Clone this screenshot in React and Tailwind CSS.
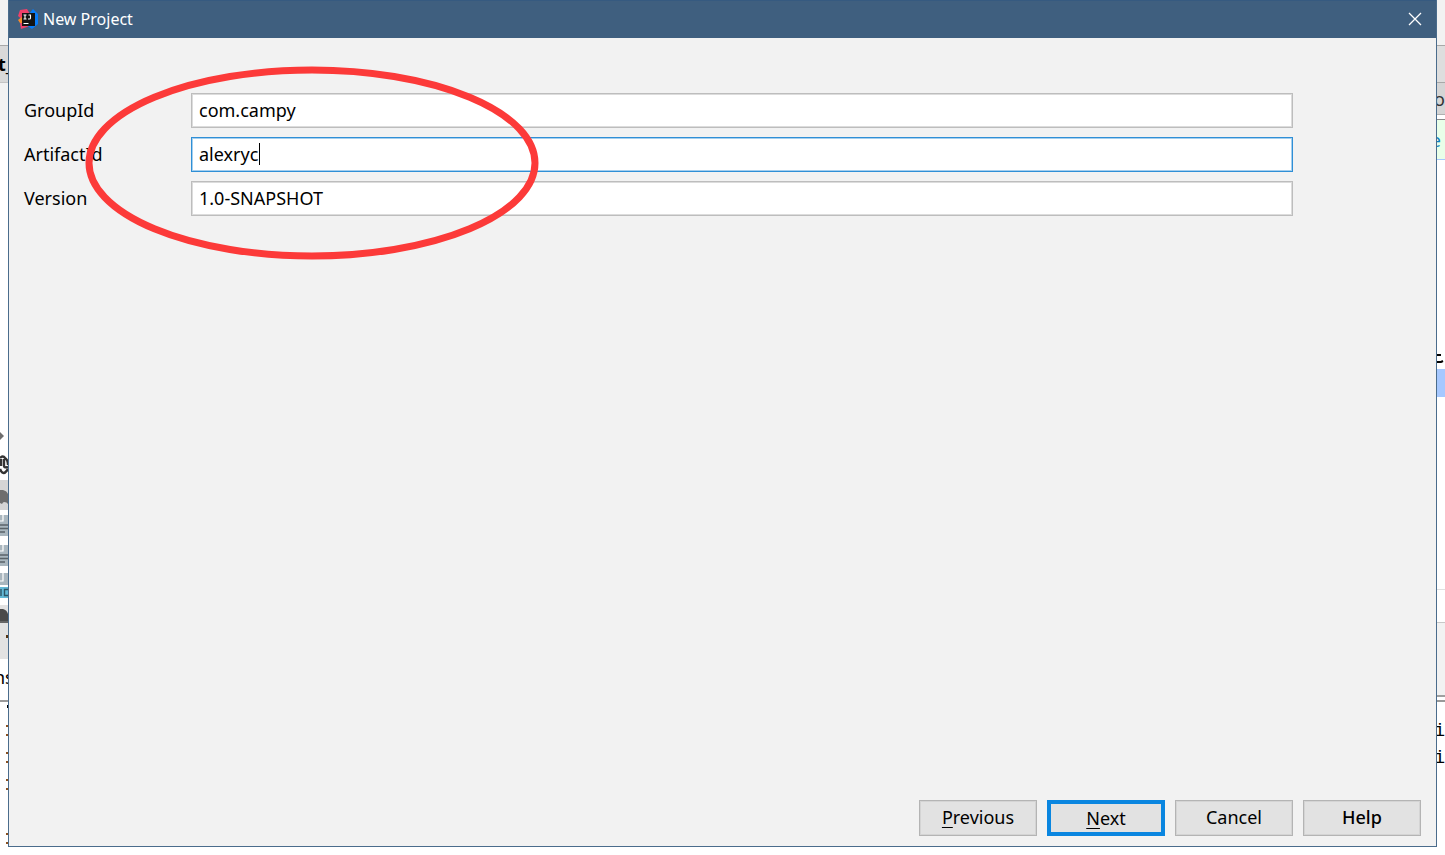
import { useState } from "react";

const fields = [
  { id: "groupId", label: "GroupId" },
  { id: "artifactId", label: "ArtifactId" },
  { id: "version", label: "Version" },
];

function IdeaLogo() {
  return (
    <svg width="20" height="20" viewBox="0 0 20 20" aria-hidden="true">
      <path d="M2 1 L9 0 L12 5 L6 12 L0 7 Z" fill="#f0406a" />
      <path d="M0 11 L5 7 L6 15 L2 14 Z" fill="#f98a2a" />
      <path d="M2 14 L9 15 L12 17 L3 20 Z" fill="#f0406a" />
      <path d="M11 5 L15 0 L20 5 L20 15 L14 20 L8 16 Z" fill="#087cfa" />
      <rect x="4" y="4" width="13" height="13" fill="#141414" />
      <path
        d="M5.5 6h3M7 6v4M5.5 10h3M10.5 6h2.5M12.5 6v3q0 1-1 1h-1.5M5.5 14.5h5"
        stroke="#fff"
        strokeWidth="1.1"
        fill="none"
      />
    </svg>
  );
}

function FileIcon() {
  return (
    <svg width="8" height="21" viewBox="0 0 8 21" className="block" aria-hidden="true">
      <rect width="8" height="21" fill="#a9b6be" />
      <path d="M0 6h3V0" stroke="#fff" strokeWidth="1.2" fill="none" />
      <path d="M0 10h8M0 13.5h8M0 17h5" stroke="#5a6369" strokeWidth="1.6" />
    </svg>
  );
}

// slice of the IDE that shows left of the dialog
function LeftEdge() {
  return (
    <div className="flex w-2 shrink-0 flex-col overflow-hidden bg-white text-lg leading-9 whitespace-nowrap text-black">
      <div className="h-[45px] bg-[#f2f2f2]" />
      <div className="h-[38px] border-y border-[#a8a8a8] border-b-[#c4c4c4] bg-[#d9d9d9] font-bold">
        <span className="-ml-0.5">t_</span>
      </div>
      <div className="h-[37px] bg-[#f2f2f2]" />
      <div className="h-[310px]" />
      <svg width="8" height="12" viewBox="0 0 8 12" aria-hidden="true">
        <path d="M0 2l4 4-4 4z" fill="#6e6e6e" />
      </svg>
      <div className="h-[12px]" />
      <svg width="8" height="22" viewBox="0 0 8 22" aria-hidden="true">
        <path
          d="M0 4q3-3 5 0q3 2 3 7M1 5v7M4 5v7q0 2 4 1M0 15q3 8 8 0"
          stroke="#333"
          strokeWidth="2.4"
          fill="none"
        />
      </svg>
      <div className="h-1" />
      <div className="h-[30px] bg-[#d5d5d5] pt-[10px]">
        <svg width="8" height="14" viewBox="0 0 8 14" className="block" aria-hidden="true">
          <path d="M0 0h3q4 1 5 4v10q-1-2-4-2-1 0-2 2l-2-1z" fill="#6e6e6e" />
        </svg>
      </div>
      <div className="h-[5px]" />
      <FileIcon />
      <div className="h-[9px]" />
      <FileIcon />
      <div className="h-[7px]" />
      <svg width="8" height="26" viewBox="0 0 8 26" className="block" aria-hidden="true">
        <rect width="8" height="12" fill="#a9b6be" />
        <path d="M0 8h3V0" stroke="#fff" strokeWidth="1.2" fill="none" />
        <rect y="14" width="8" height="11" fill="#62b8d6" />
        <path d="M1 16v7M8 16.5h-3.5v6H8" stroke="#2c5566" strokeWidth="1.4" fill="none" />
      </svg>
      <div className="h-[6px]" />
      <div className="flex h-[18px] items-end border-b-2 border-[#666] bg-[#e2e2e2]">
        <svg width="8" height="12" viewBox="0 0 8 12" aria-hidden="true">
          <path d="M0 0h3q4 1 5 5v7H0z" fill="#4a4a4a" />
        </svg>
      </div>
      <div className="flex h-[36px] flex-col items-end bg-[#e2e2e2] pt-3">
        <span className="h-[3px] w-[2px] bg-[#553311]" />
      </div>
      <div className="h-[41px]">
        <span className="-ml-1.5">ns</span>
      </div>
      <div className="h-[2px] bg-[#999]" />
      <div className="flex flex-col items-end pt-[3px]">
        <span className="h-[3px] w-px bg-black" />
        <span className="mt-[17px] h-[11px] w-[2px] border-y-2 border-[#8a5020]" />
        <span className="mt-4 h-[11px] w-[2px] border-y-2 border-[#8a5020]" />
        <span className="mt-4 h-[11px] w-[2px] border-y-2 border-[#8a5020]" />
        <span className="mt-[43px] h-[11px] w-[2px] border-y-2 border-[#8a5020]" />
      </div>
    </div>
  );
}

// slice of the IDE that shows right of the dialog
function RightEdge() {
  return (
    <div className="flex w-2 shrink-0 flex-col overflow-hidden bg-white text-lg whitespace-nowrap text-black">
      <div className="h-[45px] bg-[#f2f2f2]" />
      <div className="h-[38px] border-y border-[#a8a8a8] bg-[#dedede]" />
      <div className="flex h-8 justify-end border-b border-[#b0b0b0] bg-[#d5d5d5] leading-8 text-[#333]">
        o
      </div>
      <div className="h-1" />
      <div className="flex h-[41px] justify-end border-t border-b border-t-[#888] border-b-[#a6c8ff] bg-[#e9ffe9] pr-1 leading-10 text-[#0e7fbf]">
        e
      </div>
      <div className="flex h-[209px] flex-col justify-end pb-1.5">
        <svg width="8" height="9" viewBox="0 0 8 9" aria-hidden="true">
          <path d="M0 1h4M0 8h4l2-1" stroke="#000" strokeWidth="2" fill="none" />
        </svg>
      </div>
      <div className="h-7 bg-[#a6c8ff]" />
      <div className="h-[193px] border-b border-[#e0e0e0]" />
      <div className="h-[33px] border-b border-[#c8c8c8]" />
      <div className="h-[74px] border-b-2 border-[#a0a0a0] bg-[#f2f2f2]" />
      <div className="h-[3px]" />
      <div className="h-[2px] bg-[#999]" />
      <div className="flex flex-col items-end pt-4 font-['Liberation_Mono',monospace] leading-[27px]">
        <span>i</span>
        <span>i</span>
      </div>
    </div>
  );
}

function DialogButton({ children, primary }) {
  return (
    <button
      type="button"
      className={`h-9 w-[118px] bg-[#e2e2e2] pb-0.5 text-lg text-black ${
        primary
          ? "border-4 border-[#0a86e0]"
          : "border border-[#b4b4b4] ring-1 ring-[#d4d4d4] ring-inset"
      }`}
    >
      {children}
    </button>
  );
}

export default function App() {
  const [values, setValues] = useState({
    groupId: "com.campy",
    artifactId: "alexryc",
    version: "1.0-SNAPSHOT",
  });

  return (
    <div className="flex min-h-screen bg-white font-['Noto_Sans',sans-serif]">
      <LeftEdge />
      <div className="relative mb-2 flex min-w-0 flex-1 flex-col border border-t-0 border-[#4a6c8c] bg-[#f2f2f2]">
        <header className="flex h-[38px] items-center border-t border-[#365a80] bg-[#3f5f7f] pr-[14px] pb-0.5 pl-[9px] text-white">
          <IdeaLogo />
          <h1 className="ml-[5px] flex-1 text-base font-normal">New Project</h1>
          <button type="button" aria-label="Close">
            <svg width="14" height="14" viewBox="0 0 14 14" aria-hidden="true">
              <path d="M1 1l12 12M13 1L1 13" stroke="#fff" strokeWidth="1.3" />
            </svg>
          </button>
        </header>

        <form className="flex flex-1 flex-col gap-[9px] pt-[55px] pr-[143px] pl-[15px] text-lg text-black">
          {fields.map(({ id, label }) => (
            <div key={id} className="flex h-[35px] items-center">
              <label htmlFor={id} className="w-[167px] shrink-0 pb-0.5">
                {label}
              </label>
              <div className="relative flex-1">
                <input
                  id={id}
                  type="text"
                  value={values[id]}
                  onChange={(e) => setValues({ ...values, [id]: e.target.value })}
                  className={`block h-[35px] w-full border bg-white px-[7px] pb-0.5 ring-1 outline-none ring-inset ${
                    id === "artifactId"
                      ? "border-[#2f8fd6] ring-[#a5cfee]"
                      : "border-[#bdbdbd] ring-[#dcdcdc]"
                  }`}
                />
                {id === "artifactId" && (
                  <span className="absolute top-[6px] left-[68px] h-[22px] w-px bg-black" />
                )}
              </div>
            </div>
          ))}
        </form>

        <footer className="flex justify-end gap-[10px] pr-[15px] pb-[10px]">
          <DialogButton>
            <u className="underline-offset-3">P</u>revious
          </DialogButton>
          <DialogButton primary>
            <u className="underline-offset-3">N</u>ext
          </DialogButton>
          <DialogButton>Cancel</DialogButton>
          <DialogButton>
            <span className="font-medium">Help</span>
          </DialogButton>
        </footer>

        {/* red marker ring around the coordinates */}
        <svg
          width="456"
          height="194"
          viewBox="0 0 456 194"
          className="pointer-events-none absolute top-[66px] left-[75px]"
          aria-hidden="true"
        >
          <ellipse cx="228" cy="97" rx="223" ry="93" fill="none" stroke="#fc3a39" strokeWidth="7" />
        </svg>
      </div>
      <RightEdge />
    </div>
  );
}
